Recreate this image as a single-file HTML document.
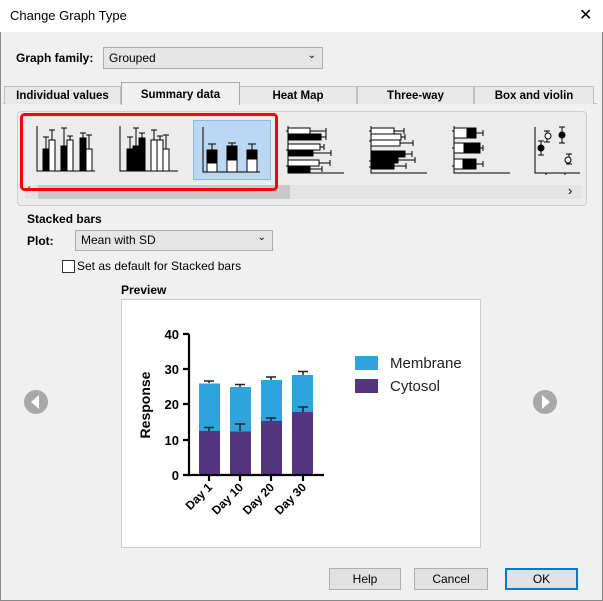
<!DOCTYPE html>
<html><head><meta charset="utf-8"><style>
*{box-sizing:border-box}
body{margin:0;width:603px;height:601px;background:#f0f0f0;font-family:"Liberation Sans",Tahoma,sans-serif;font-size:12px;color:#000;position:relative;overflow:hidden}
.a{position:absolute}
.b{font-weight:bold}
.combo{position:absolute;background:#e5e5e5;border:1px solid #acacac;padding:3px 5px;font-size:12px}
.btn{position:absolute;background:#e1e1e1;border:1px solid #adadad;text-align:center;line-height:20px;font-size:12px}
.tab{position:absolute;border:1px solid #c0c0c0;border-bottom:none;background:#e8e8e8;text-align:center;font-weight:bold;font-size:11.5px}
</style></head><body>
<div class="a" style="left:0;top:0;width:603px;height:601px;border:1px solid #888"></div>
<div class="a" style="left:0;top:0;width:603px;height:32px;background:#fff"></div>
<div class="a" style="left:10px;top:8px;font-size:13px">Change Graph Type</div>
<div class="a" style="left:579px;top:5px;font-size:16px;font-family:'DejaVu Sans',sans-serif">✕</div>
<div class="a b" style="left:16px;top:51px">Graph family:</div>
<div class="combo" style="left:103px;top:47px;width:220px;height:22px">Grouped<span style="position:absolute;right:6px;top:2px;font-size:10px">&#8964;</span></div>
<div class="a" style="left:3px;top:103px;width:594px;height:1px;background:#c0c0c0"></div>
<div class="tab" style="left:4px;top:86px;width:117px;height:18px;line-height:18px">Individual values</div>
<div class="tab" style="left:239px;top:86px;width:118px;height:18px;line-height:18px">Heat Map</div>
<div class="tab" style="left:357px;top:86px;width:117px;height:18px;line-height:18px">Three-way</div>
<div class="tab" style="left:474px;top:86px;width:120px;height:18px;line-height:18px">Box and violin</div>
<div class="tab" style="left:121px;top:82px;width:119px;height:23px;line-height:24px;background:#f0f0f0;border-color:#aaa">Summary data</div>
<div class="a" style="left:17px;top:111px;width:570px;height:95px;border:1px solid #ccc;border-radius:4px;background:#ececec"></div>
<div class="a" style="left:25px;top:185px;width:557px;height:14px;background:#e4e4e4"></div>
<div class="a" style="left:38px;top:185px;width:252px;height:14px;background:#c8c8c8"></div>
<div class="a" style="left:27px;top:183px;font-size:11px">‹</div>
<div class="a" style="left:568px;top:183px;font-size:13px">›</div>
<div class="a" style="left:193px;top:120px;width:78px;height:60px;background:#bcd7f1;border:1px solid #8bb8e8"></div>
<svg class="a" style="left:0;top:0" width="603" height="210" fill="none" stroke="#000" stroke-width="1">
<g>
<path d="M37 126V171H95"/>
<rect x="43" y="149" width="6" height="22" fill="#000"/><rect x="49" y="140" width="6" height="31" fill="#fff"/>
<rect x="61" y="146" width="6" height="25" fill="#000"/><rect x="67" y="140" width="6" height="31" fill="#fff"/>
<rect x="80" y="138" width="6" height="33" fill="#000"/><rect x="86" y="149" width="6" height="22" fill="#fff"/>
<path d="M46 149V137M43 137h6M52 140V130M49 130h6M64 146V128M61 128h6M70 140V136M67 136h6M83 138V133M80 133h6M89 149V135M86 135h6"/>
<path d="M120 126V171H178"/>
<rect x="127" y="149" width="6" height="22" fill="#000"/><rect x="133" y="146" width="6" height="25" fill="#000"/><rect x="139" y="138" width="6" height="33" fill="#000"/>
<rect x="151" y="140" width="6" height="31" fill="#fff"/><rect x="157" y="140" width="6" height="31" fill="#fff"/><rect x="163" y="149" width="6" height="22" fill="#fff"/>
<path d="M136 146V128M133 128h6M142 138V133M139 133h6M130 149V137M127 137h6M154 140V130M151 130h6M160 140V136M157 136h6M166 149V135M163 135h6"/>
<path d="M203 127V172H260"/>
<rect x="207" y="150" width="10" height="13" fill="#000"/><rect x="207" y="163" width="10" height="9" fill="#fff"/>
<rect x="227" y="146" width="10" height="14" fill="#000"/><rect x="227" y="160" width="10" height="12" fill="#fff"/>
<rect x="247" y="150" width="10" height="9" fill="#000"/><rect x="247" y="159" width="10" height="13" fill="#fff"/>
<path d="M212 150V144M208 144h8M232 146V143M228 143h8M252 150V144M248 144h8"/>
<path d="M288 126V173H344M286 131h2M286 150h2M286 166h2"/>
<rect x="288" y="128" width="22" height="6" fill="#fff"/><rect x="288" y="134" width="33" height="6" fill="#000"/>
<rect x="288" y="144" width="32" height="6" fill="#fff"/><rect x="288" y="150" width="25" height="6" fill="#000"/>
<rect x="288" y="160" width="31" height="6" fill="#fff"/><rect x="288" y="166" width="22" height="6" fill="#000"/>
<path d="M310 131h16M326 128v6M321 137h5M326 134v6M320 147h4M324 144v6M313 153h18M331 150v6M319 163h11M330 160v6M310 169h12M322 166v6"/>
<path d="M371 126V173H427M369 131h2M369 141h2M369 161h2M369 167h2"/>
<rect x="371" y="128" width="23" height="6" fill="#fff"/><rect x="371" y="134" width="30" height="6" fill="#fff"/><rect x="371" y="140" width="29" height="6" fill="#fff"/>
<rect x="371" y="151" width="34" height="6" fill="#000"/><rect x="371" y="157" width="27" height="6" fill="#000"/><rect x="371" y="163" width="23" height="6" fill="#000"/>
<path d="M394 131h10M404 128v6M401 137h4M405 134v6M400 143h13M413 140v6M405 154h7M412 151v6M398 160h17M415 157v6M394 166h12M406 163v6"/>
<path d="M454 126V173H510M452 131h2M452 148h2M452 166h2"/>
<rect x="454" y="128" width="22" height="10" fill="#fff"/><rect x="467" y="128" width="9" height="10" fill="#000"/>
<rect x="454" y="143" width="26" height="10" fill="#fff"/><rect x="464" y="143" width="16" height="10" fill="#000"/>
<rect x="454" y="159" width="22" height="10" fill="#fff"/><rect x="463" y="159" width="13" height="10" fill="#000"/>
<path d="M476 133h7M483 130v6M480 148h3M483 145v6M476 164h7M483 161v6"/>
<path d="M535 127V173H580M546 173v2M565 173v2"/>
<path d="M541 141v14M538 141h6M538 155h6M547 131v11M544 131h6M544 142h6M562 127v16M559 127h6M559 143h6M569 154v10M566 154h6M566 164h6"/>
<circle cx="541" cy="148" r="3" fill="#000"/><circle cx="548" cy="136" r="3" fill="#fff"/><circle cx="562" cy="135" r="3" fill="#000"/><circle cx="568" cy="160" r="3" fill="#fff"/>
</g>
<rect x="21.5" y="114.5" width="255" height="75" rx="3" stroke="#f00" stroke-width="3"/>
</svg>
<div class="a b" style="left:27px;top:212px">Stacked bars</div>
<div class="a b" style="left:27px;top:234px">Plot:</div>
<div class="combo" style="left:75px;top:230px;width:198px;height:21px;padding-top:2px">Mean with SD<span style="position:absolute;right:6px;top:1px;font-size:10px">&#8964;</span></div>
<div class="a" style="left:62px;top:260px;width:13px;height:13px;border:1px solid #333;background:#fff"></div>
<div class="a" style="left:77px;top:259px">Set as default for Stacked bars</div>
<div class="a b" style="left:121px;top:283px">Preview</div>
<div class="a" style="left:121px;top:299px;width:360px;height:249px;background:#fff;border:1px solid #ccc"></div>
<svg class="a" style="left:0;top:0" width="603" height="601">
<circle cx="36" cy="402" r="12" fill="#a8a8a8"/><path d="M39 395l-8 7 8 7z" fill="#fff"/>
<circle cx="545" cy="402" r="12" fill="#a8a8a8"/><path d="M542 395l8 7-8 7z" fill="#fff"/>
<g fill="#2fa3db"><rect x="199" y="383.5" width="21" height="91"/><rect x="230" y="387" width="21" height="88"/><rect x="261" y="380" width="21" height="95"/><rect x="292" y="375" width="21" height="100"/></g>
<g fill="#55357f"><rect x="199" y="431" width="21" height="44"/><rect x="230" y="431.5" width="21" height="43.5"/><rect x="261" y="421" width="21" height="54"/><rect x="292" y="412" width="21" height="63"/></g>
<g stroke="#222" stroke-width="1.5" fill="none">
<path d="M209 383v-2M204 381h10M240 387v-2.5M235 384.5h10M271 380v-3M266 377h10M303 375v-3.5M298 371.5h10"/>
<path d="M209 431v-3.5M204 427.5h10M240 431v-7M235 424h10M271 421v-3M266 418h10M303 412v-5M298 407h10"/>
</g>
<g stroke="#000" stroke-width="2.2" fill="none">
<path d="M189 334V475H324M183 334h6M183 369h6M183 404h6M183 440h6M183 475h6M209 475v6M240 475v6M271 475v6M303 475v6"/>
</g>
<g font-family="Liberation Sans,Arial,sans-serif" font-weight="bold" font-size="13" text-anchor="end">
<text x="179" y="339">40</text><text x="179" y="374">30</text><text x="179" y="409">20</text><text x="179" y="445">10</text><text x="179" y="480">0</text>
<text transform="translate(150,405) rotate(-90)" text-anchor="middle" font-size="14">Response</text>
<text transform="translate(213,488) rotate(-45)" font-size="12">Day 1</text>
<text transform="translate(244,488) rotate(-45)" font-size="12">Day 10</text>
<text transform="translate(275,488) rotate(-45)" font-size="12">Day 20</text>
<text transform="translate(307,488) rotate(-45)" font-size="12">Day 30</text>
</g>
<rect x="355" y="356" width="23" height="14" fill="#2fa3db"/><rect x="355" y="379" width="23" height="14" fill="#55357f"/>
<text x="390" y="368" font-family="Liberation Sans,Arial,sans-serif" font-size="15" fill="#222">Membrane</text>
<text x="390" y="391" font-family="Liberation Sans,Arial,sans-serif" font-size="15" fill="#222">Cytosol</text>
</svg>
<div class="btn" style="left:329px;top:568px;width:72px;height:22px">Help</div>
<div class="btn" style="left:414px;top:568px;width:74px;height:22px">Cancel</div>
<div class="btn" style="left:505px;top:568px;width:73px;height:22px;border:2px solid #0078d7;line-height:18px">OK</div>
</body></html>
